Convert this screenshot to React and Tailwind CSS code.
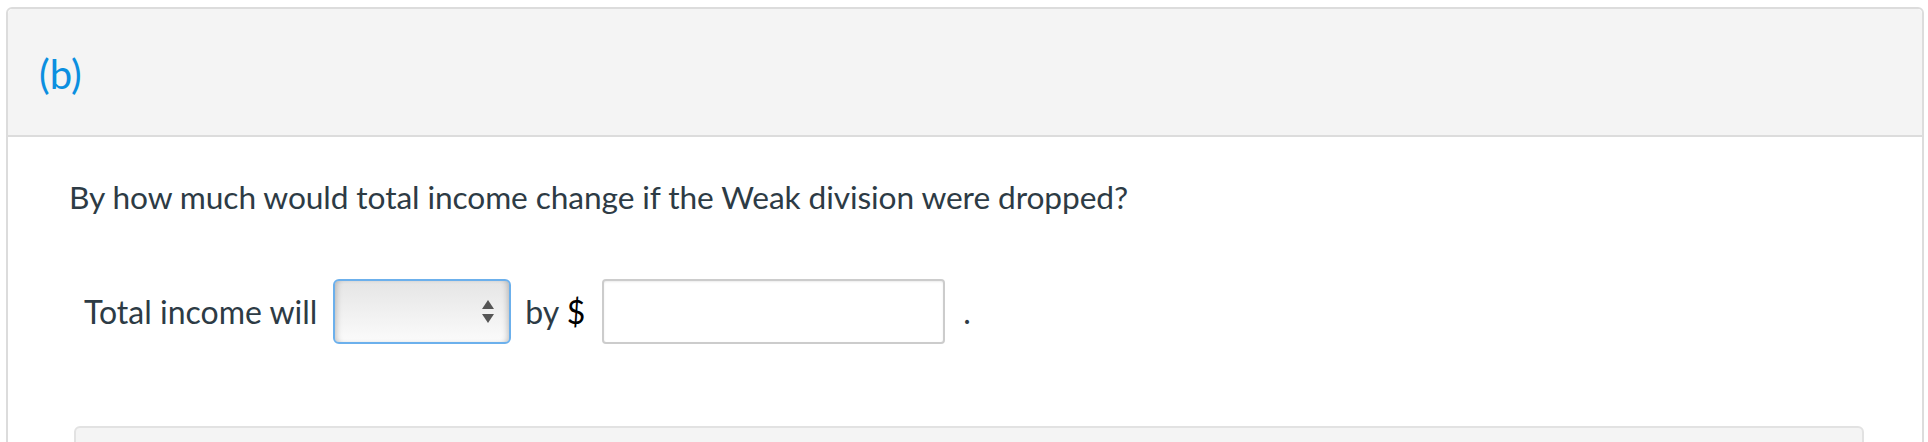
import React from 'react';

function SelectArrows() {
    return (
        <svg width="14" height="26" viewBox="0 0 14 26" className="absolute right-[14px] top-1/2 -translate-y-1/2">
            <polygon points="7,1 13,10 1,10" fill="#555" />
            <polygon points="1,15 13,15 7,24" fill="#555" />
        </svg>
    );
}

export default function App() {
    return (
        <div className="w-[1928px] h-[442px] bg-white overflow-hidden pt-[7px] pl-[6px] pr-[4px]" style={{ fontFamily: 'Lato, "Open Sans", sans-serif' }}>
            <div className="h-[460px] border-2 border-[#dcdcdc] rounded-t-[6px] bg-white">

                {/* ---------- header ---------- */}
                <div className="h-[128px] bg-[#f4f4f4] border-b-2 border-[#dcdcdc] rounded-t-[5px] flex items-center pl-[31px]">
                    <h2 className="text-[40px] text-[#0b8fe0] leading-none mt-[4px]">(b)</h2>
                </div>

                {/* ---------- body ---------- */}
                <div className="pl-[61px] pr-[58px] pt-[40px]">
                    <p className="text-[31.7px] text-[#2d3b45] leading-[40px] tracking-[-0.1px]">
                        By how much would total income change if the Weak division were dropped?
                    </p>

                    <div className="flex items-center mt-[62px] text-[32px] text-[#2d3b45]">
                        <span className="ml-[15px]">Total income will</span>

                        <div className="relative ml-[16px] w-[178px] h-[65px] rounded-[6px] border-2 border-[#6cb0ec] bg-gradient-to-b from-[#e5e5e5] to-[#fbfbfb] shadow-[inset_5px_0_6px_-4px_rgba(0,0,0,0.25),inset_-5px_0_6px_-4px_rgba(0,0,0,0.25)]">
                            <SelectArrows />
                        </div>

                        <span className="ml-[14px]">by <span className="text-black">$</span></span>

                        <div className="ml-[17px] w-[343px] h-[65px] border-2 border-[#cccccc] rounded-[4px] bg-white shadow-[inset_0_1px_2px_rgba(0,0,0,0.08)]"></div>

                        <span className="ml-[18px]">.</span>
                    </div>

                    <div className="mt-[82px] ml-[5px] mr-[0px] h-[60px] bg-[#f4f4f4] border-2 border-[#e2e2e2] rounded-[6px]"></div>
                </div>
            </div>
        </div>
    );
}
